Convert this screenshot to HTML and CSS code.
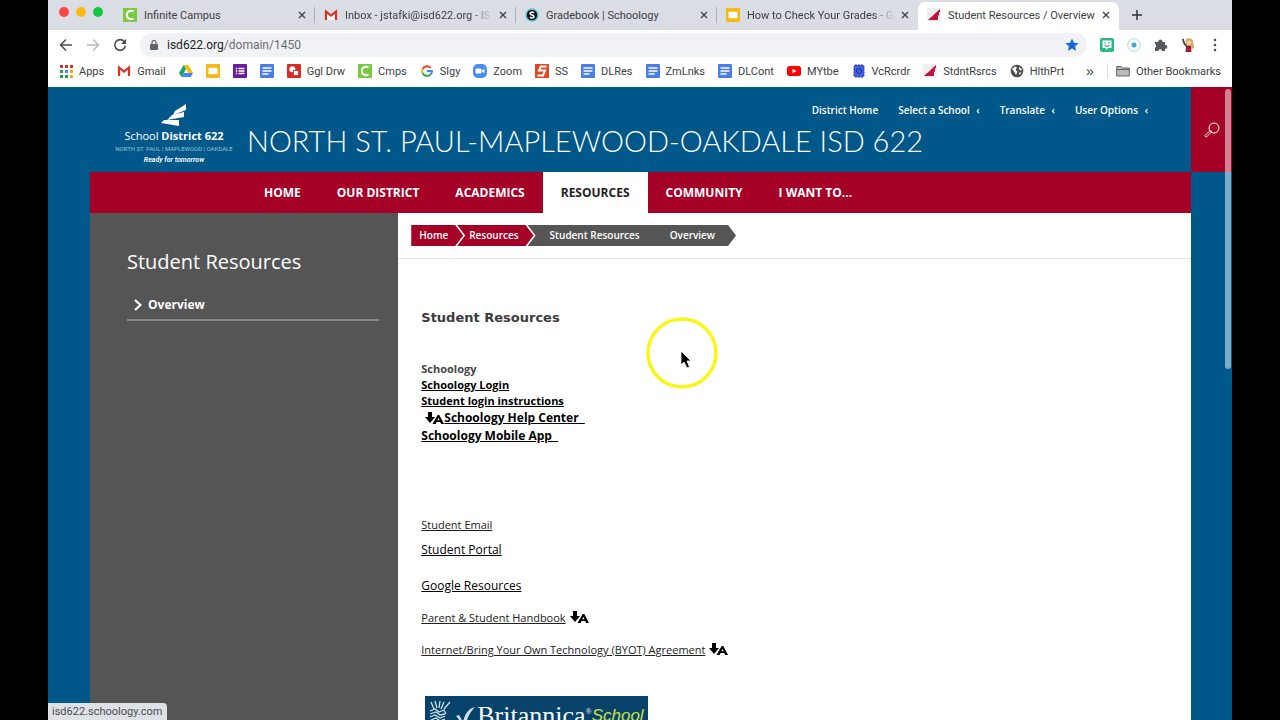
FILE: index.html
```html
<!DOCTYPE html>
<html lang="en">
<head>
    <meta charset="UTF-8">
    <meta name="viewport" content="width=device-width, initial-scale=1.0">
    <title>Student Resources / Overview</title>
    <link rel="stylesheet" href="styles.css">
</head>
<body>

    <!-- Shared icons -->
    <svg class="icon-defs" aria-hidden="true">
        <symbol id="i-campus" viewBox="0 0 14 14"><rect width="14" height="14" fill="#7ac943"/><path d="M10.5 3.2C6.500 1.800 3.800 4 3.800 7s2.700 5 6.700 3.800" fill="none" stroke="#fff" stroke-width="2"/></symbol>
        <symbol id="i-gmail" viewBox="0 0 14 14"><path d="M2 12V3.500l5 4 5-4V12" fill="#fff" stroke="#d93025" stroke-width="2.200"/></symbol>
        <symbol id="i-schoology" viewBox="0 0 14 14"><circle cx="7" cy="7" r="6" fill="#111" stroke="#5cc5d6" stroke-width="1.600"/><path d="M9 4.800C7.500 3.600 5 4 5 5.500S9 7 9 8.600 6.500 10.400 4.900 9.200" fill="none" stroke="#fff" stroke-width="1.500"/></symbol>
        <symbol id="i-slides" viewBox="0 0 14 14"><rect width="14" height="14" rx="1" fill="#f4b912"/><rect x="2.500" y="3.800" width="9" height="6.400" fill="#fff"/></symbol>
        <symbol id="i-forms" viewBox="0 0 14 14"><rect width="14" height="14" rx="1" fill="#6a1b9a"/><path d="M2.800 4.500h1.500M2.800 7h1.500M2.800 9.500h1.500M5.500 4.500h6M5.500 7h6M5.500 9.500h6" stroke="#fff" stroke-width="1.400"/></symbol>
        <symbol id="i-docs" viewBox="0 0 14 14"><rect width="14" height="14" rx="1" fill="#4a7de8"/><path d="M2.500 4h9M2.500 7h9M2.500 10h6" stroke="#fff" stroke-width="1.500"/></symbol>
        <symbol id="i-district" viewBox="0 0 14 14"><rect width="14" height="14" rx="2" fill="#eee"/><path d="M13 1v3L7 6.500zM12 4v3.500L4 9.500l3-3zM11 7.500V12L1 12l3-3z" fill="#c0143c"/></symbol>
        <symbol id="i-close" viewBox="0 0 8 8"><path d="M1 1l6 6M7 1L1 7" stroke="#444" stroke-width="1.400"/></symbol>
        <symbol id="i-translate" viewBox="0 0 19 12"><path d="M3 0h4v5h3l-5 6-5-6h3z"/><path d="M7.500 12l5.200-9h1.600l4.700 9h-2.800l-1-2h-3.600l-1 2zM12.300 8.300h2.200l-1.100-2.400z" fill-rule="evenodd"/></symbol>
    </svg>

    <div class="browser">

        <!-- Tabs -->
        <div class="tab-bar">
            <div class="window-dots"><span class="dot red"></span><span class="dot yellow"></span><span class="dot green"></span></div>
            <div class="tab"><svg class="fav"><use href="#i-campus"/></svg><span class="tab-title">Infinite Campus</span><button class="tab-close" aria-label="Close tab"><svg><use href="#i-close"/></svg></button></div>
            <div class="tab"><svg class="fav"><use href="#i-gmail"/></svg><span class="tab-title fade">Inbox - jstafki@isd622.org - IS</span><button class="tab-close" aria-label="Close tab"><svg><use href="#i-close"/></svg></button></div>
            <div class="tab"><svg class="fav"><use href="#i-schoology"/></svg><span class="tab-title">Gradebook | Schoology</span><button class="tab-close" aria-label="Close tab"><svg><use href="#i-close"/></svg></button></div>
            <div class="tab last"><svg class="fav"><use href="#i-slides"/></svg><span class="tab-title fade">How to Check Your Grades - G</span><button class="tab-close" aria-label="Close tab"><svg><use href="#i-close"/></svg></button></div>
            <div class="tab active"><svg class="fav"><use href="#i-district"/></svg><span class="tab-title">Student Resources / Overview</span><button class="tab-close" aria-label="Close tab"><svg><use href="#i-close"/></svg></button></div>
            <button class="new-tab" aria-label="New tab"><svg viewBox="0 0 10 10"><path d="M5 0v10M0 5h10" stroke="#333" stroke-width="1.500"/></svg></button>
        </div>

        <!-- Address bar -->
        <div class="toolbar">
            <button aria-label="Back"><svg viewBox="0 0 14 14"><path d="M13 7H2M7 1.500L1.500 7 7 12.500" fill="none" stroke="#4a4d51" stroke-width="1.500"/></svg></button>
            <button aria-label="Forward"><svg viewBox="0 0 14 14"><path d="M1 7h11M7 1.500L12.500 7 7 12.500" fill="none" stroke="#bbb" stroke-width="1.500"/></svg></button>
            <button aria-label="Reload"><svg viewBox="0 0 14 14"><path d="M11.500 4A5.300 5.300 0 1 0 12.300 8" fill="none" stroke="#4a4d51" stroke-width="1.600"/><path d="M13 1v5H8z" fill="#4a4d51"/></svg></button>
            <div class="address">
                <svg class="lock" viewBox="0 0 8 10"><rect y="4" width="8" height="6" rx="1" fill="#5f6368"/><path d="M2 4V2.500a2 2 0 0 1 4 0V4" fill="none" stroke="#5f6368" stroke-width="1.200"/></svg>
                <a class="url" href="#">isd622.org<span>/domain/1450</span></a>
                <button aria-label="Bookmark this page"><svg viewBox="0 0 14 14"><path d="M7 .5l1.900 4.300 4.700.4-3.500 3.100 1 4.700L7 10.600 2.900 13l1-4.700L.4 5.200l4.700-.4z" fill="#1a66d9"/></svg></button>
            </div>
            <div class="extensions">
                <button aria-label="Bitmoji"><svg viewBox="0 0 14 14"><rect width="14" height="14" rx="2" fill="#28b882"/><path d="M2.500 2.500h9v7.500H8L6.500 12l-1-2h-3z" fill="#fff"/><path d="M5 4.300v1.400M9 4.300v1.400M4.500 7c1 1.700 4 1.700 5 0" fill="none" stroke="#28b882" stroke-width="1.200"/></svg></button>
                <button aria-label="Screencastify"><svg viewBox="0 0 14 14"><circle cx="7" cy="7" r="6.300" fill="#fff" stroke="#a5d5e5"/><circle cx="7" cy="7" r="2.500" fill="#3ea6dc"/></svg></button>
                <button aria-label="Extensions"><svg viewBox="0 0 14 14"><path d="M1 4h3.500a2 2 0 1 1 3.800 0H11v3a1.900 1.900 0 1 1 0 3.700V13H8a1.800 1.800 0 0 0-3.600 0H1v-3.300a1.800 1.800 0 0 0 0-3.400z" fill="#55585c"/></svg></button>
                <button aria-label="Profile"><svg viewBox="0 0 14 16"><path d="M5 1c4-2 8 0 8 4l1 6-3 2-6-3-1-5z" fill="#d3aa63"/><circle cx="8" cy="5.500" r="2.700" fill="#f4cda5"/><path d="M1 1l2 6 3 3" fill="none" stroke="#5a4035" stroke-width="2"/><path d="M5 9h5l1 7H4z" fill="#a01c30"/><path d="M7 9l2 2 1-2z" fill="#222"/></svg></button>
                <button aria-label="Menu"><svg viewBox="0 0 14 14"><g fill="#4a4d51"><circle cx="7" cy="2" r="1.300"/><circle cx="7" cy="7" r="1.300"/><circle cx="7" cy="12" r="1.300"/></g></svg></button>
            </div>
        </div>

        <!-- Bookmarks -->
        <div class="bookmarks">
            <a href="#"><svg viewBox="0 0 14 14"><g fill="#d93025"><path d="M1 1h3v3H1zM6 1h3v3H6zM11 1h3v3h-3z"/></g><path d="M1 6h3v3H1z" fill="#2a9d4a"/><path d="M6 6h3v3H6z" fill="#4285f4"/><path d="M11 6h3v3h-3zM11 11h3v3h-3z" fill="#f0a818"/><path d="M1 11h3v3H1zM6 11h3v3H6z" fill="#2a9d4a"/></svg>Apps</a>
            <a href="#"><svg><use href="#i-gmail"/></svg>Gmail</a>
            <a href="#" aria-label="Drive"><svg viewBox="0 0 14 14"><path d="M4.700 1h4.600L14 9H9.500z" fill="#fbbc05"/><path d="M4.700 1L7 5 2.500 13 0 9z" fill="#1da462"/><path d="M4.700 9H14l-2.300 4H2.500z" fill="#4285f4"/></svg></a>
            <a href="#" aria-label="Slides"><svg><use href="#i-slides"/></svg></a>
            <a href="#" aria-label="Forms"><svg><use href="#i-forms"/></svg></a>
            <a href="#" aria-label="Docs"><svg><use href="#i-docs"/></svg></a>
            <a href="#"><svg viewBox="0 0 14 14"><rect width="14" height="14" rx="1" fill="#d92b25"/><circle cx="5.300" cy="5.300" r="3" fill="#fff"/><rect x="6.500" y="6.500" width="5" height="5" fill="#fff" stroke="#d92b25" stroke-width=".8"/></svg>Ggl Drw</a>
            <a href="#"><svg><use href="#i-campus"/></svg>Cmps</a>
            <a href="#"><svg viewBox="0 0 14 14"><g fill="none" stroke-width="2"><path d="M10.800 3.800A5 5 0 0 0 2.600 5" stroke="#ea4335"/><path d="M2.600 5a5 5 0 0 0 0 4" stroke="#fbbc05"/><path d="M2.600 9a5 5 0 0 0 7.800 1.700" stroke="#34a853"/><path d="M10.400 10.700A5 5 0 0 0 12 7H7" stroke="#4285f4"/></g></svg>Slgy</a>
            <a href="#"><svg viewBox="0 0 14 14"><rect width="14" height="14" rx="5" fill="#4a8cf0"/><rect x="2.500" y="4.500" width="6" height="5" rx="1" fill="#fff"/><path d="M9 6.500l2.500-1.700v4.400L9 7.500z" fill="#fff"/></svg>Zoom</a>
            <a href="#"><svg viewBox="0 0 14 14"><rect width="14" height="14" fill="#e0491f"/><path d="M11.500 2.500H5.800L4 6.500h6L8 11.500H2.500" fill="none" stroke="#fff" stroke-width="2"/></svg>SS</a>
            <a href="#"><svg><use href="#i-docs"/></svg>DLRes</a>
            <a href="#"><svg><use href="#i-docs"/></svg>ZmLnks</a>
            <a href="#"><svg><use href="#i-docs"/></svg>DLCont</a>
            <a href="#"><svg viewBox="0 0 14 14"><rect x="0" y="2" width="14" height="10" rx="2.500" fill="#f00"/><path d="M5.500 4.700v4.600L9.500 7z" fill="#fff"/></svg>MYtbe</a>
            <a href="#"><svg viewBox="0 0 14 14"><path d="M3 1h8l1 1v10l-1 1H3l-1-1V2z" fill="#4161e0" stroke="#26358c" stroke-dasharray="2 1"/><circle cx="7" cy="7" r="2.500" fill="none" stroke="#1c2c9e"/></svg>VcRcrdr</a>
            <a href="#"><svg><use href="#i-district"/></svg>StdntRsrcs</a>
            <a href="#"><svg viewBox="0 0 14 14"><circle cx="7" cy="7" r="6.300" fill="#4a4d51"/><path d="M2 5l3-2.500 2 1L5.500 6l2 1.500L6 11 4.500 8zM9 3l3 2-1 2-2-1.500zM9 8.500l2.500 0L9.500 11z" fill="#fff"/></svg>HlthPrt</a>
            <button class="more" aria-label="More bookmarks">»</button>
            <a class="other" href="#"><svg viewBox="0 0 14 14"><path d="M.7 2.500H5l1.500 1.500h6.800v8H.7z" fill="#bbb" stroke="#666"/><path d="M1 5.500h12" stroke="#666"/></svg>Other Bookmarks</a>
        </div>

        <!-- District site -->
        <div class="page">
            <header class="site-header">
                <a class="logo" href="#">
                    <svg viewBox="0 0 26 22"><path d="M25 0v6L12 11l2-4zM23 8v5L6 16l5-5zM18 16v6L0 19l3-3z" fill="#fff"/></svg>
                    <span class="logo-name">School <b>District 622</b></span>
                    <span class="logo-cities">NORTH ST. PAUL | MAPLEWOOD | OAKDALE</span>
                    <span class="logo-tag">Ready for tomorrow</span>
                </a>
                <div class="header-main">
                    <nav class="top-links">
                        <a href="#">District Home</a>
                        <a href="#">Select a School <i>‹</i></a>
                        <a href="#">Translate <i>‹</i></a>
                        <a href="#">User Options <i>‹</i></a>
                    </nav>
                    <h1>NORTH ST. PAUL-MAPLEWOOD-OAKDALE ISD 622</h1>
                </div>
                <button class="search" aria-label="Search"><svg viewBox="0 0 16 16"><circle cx="10" cy="6" r="5" fill="none" stroke="#fff"/><path d="M6.300 8.500l1.300 1.300-5.300 5.400-1.500-1.500z" fill="none" stroke="#fff" stroke-width=".9"/></svg></button>
            </header>

            <div class="container">
                <nav class="main-nav">
                    <a href="#">HOME</a>
                    <a href="#">OUR DISTRICT</a>
                    <a href="#">ACADEMICS</a>
                    <a class="current" href="#">RESOURCES</a>
                    <a href="#">COMMUNITY</a>
                    <a href="#">I WANT TO...</a>
                </nav>

                <div class="columns">
                    <aside class="side">
                        <h2>Student Resources</h2>
                        <a href="#"><svg viewBox="0 0 8 12"><path d="M1 1l5.500 5L1 11" fill="none" stroke="#fff" stroke-width="2.200"/></svg>Overview</a>
                    </aside>

                    <main class="content">
                        <nav class="crumbs">
                            <a class="crumb red first" href="#">Home</a>
                            <a class="crumb red" href="#">Resources</a>
                            <span class="crumb gray"><a href="#">Student Resources</a><a href="#">Overview</a></span>
                        </nav>

                        <div class="article">
                            <h2>Student Resources</h2>
                            <div class="schoology">
                                <h3>Schoology</h3>
                                <a href="#">Schoology Login</a>
                                <a href="#">Student login instructions</a>
                                <a class="big indent" href="#"><svg class="translate"><use href="#i-translate"/></svg>Schoology Help Center&nbsp;&nbsp;</a>
                                <a class="big" href="#">Schoology Mobile App&nbsp;&nbsp;</a>
                            </div>
                            <p class="email"><a href="#">Student Email</a></p>
                            <p class="portal"><a class="dark" href="#">Student Portal</a></p>
                            <p class="google"><a class="dark" href="#">Google Resources</a></p>
                            <p><a href="#">Parent &amp; Student Handbook</a><svg class="translate"><use href="#i-translate"/></svg></p>
                            <p><a href="#">Internet/Bring Your Own Technology (BYOT) Agreement</a><svg class="translate"><use href="#i-translate"/></svg></p>
                            <a class="britannica" href="#">
                                <svg viewBox="0 0 52 36"><g fill="none" stroke="#cfe0ea" stroke-width="1.300"><path d="M6 6l3 7M10 5l2 7M15 5l-1 7M19 6l-3 7M25 6l-6 7M5 15l5-2 4 3 5-2 2 4M5 18l6-2 4 3 5-1M5 21l5-2 5 3 5-2M6 24l5-2 4 3 5-2M7 28l5-2 6 2"/></g><path d="M31 20l3-1 4 7c2-8 5-13 12-15-5 5-9 12-10 22h-3c-1-6-3-10-6-13z" fill="#cfe0ea"/></svg>
                                <span>Britannica<sup>®</sup></span><em>School</em>
                            </a>
                        </div>
                    </main>
                </div>
            </div>

            <div class="scroll-thumb"></div>
            <div class="status">isd622.schoology.com</div>
            <svg class="pointer" viewBox="0 0 72 72"><circle cx="36" cy="36" r="34" fill="none" stroke="#fbf518" stroke-width="3.500"/><path d="M35 34v14l3-3 3 6 2.500-1-2.500-6h4z" fill="#000" stroke="#fff" stroke-width=".8"/></svg>
        </div>
    </div>

</body>
</html>
```
FILE: styles.css
```css
/* General Styles */
* {
    box-sizing: border-box;
}

body {
    margin: 0;
    background: #000;
    font-family: "Open Sans", "Noto Sans", sans-serif;
}

h1, h2, h3, p {
    margin: 0;
}

a {
    color: inherit;
    text-decoration: none;
}

button {
    border: none;
    background: none;
    padding: 0;
    cursor: pointer;
}

svg {
    display: block;
    flex: none;
}

.icon-defs {
    position: absolute;
    width: 0;
    height: 0;
}

.browser {
    display: flex;
    flex-direction: column;
    height: 100vh;
    margin: 0 48px;
    overflow: hidden;
    background: #fff;
    color: #3c4043;
    font-family: Roboto, sans-serif;
    font-size: 11px;
}

/* Tabs */
.tab-bar {
    display: flex;
    flex: none;
    height: 30px;
    padding-top: 2px;
    background: #dbdde4;
}

.window-dots {
    display: flex;
    gap: 7px;
    width: 66px;
    padding: 5px 0 0 11px;
}

.dot {
    width: 10px;
    height: 10px;
    border-radius: 50%;
}

.dot.red { background: #fc4545; }
.dot.yellow { background: #fdb913; }
.dot.green { background: #0fc943; }

.tab {
    display: flex;
    align-items: center;
    flex: 0 1 201px;
    min-width: 0;
    height: 26px;
    padding: 0 9px;
    background: linear-gradient(#aeb0b6, #aeb0b6) right center / 1px 16px no-repeat;
}

.tab.last {
    background: none;
}

.tab.active {
    height: 28px;
    padding-bottom: 2px;
    background: #fff;
    border-radius: 7px 7px 0 0;
}

.fav {
    width: 14px;
    height: 14px;
    margin-right: 7px;
}

.tab-title {
    flex: 1;
    overflow: hidden;
    white-space: nowrap;
}

.tab-title.fade {
    -webkit-mask-image: linear-gradient(to right, #000 85%, transparent);
    mask-image: linear-gradient(to right, #000 85%, transparent);
}

.tab-close {
    margin-left: 6px;
}

.tab-close svg {
    width: 8px;
    height: 8px;
}

.new-tab {
    width: 36px;
    height: 26px;
}

.new-tab svg {
    width: 10px;
    height: 10px;
    margin: 0 auto;
}

/* Address bar */
.toolbar {
    display: flex;
    align-items: center;
    flex: none;
    gap: 13px;
    height: 29px;
    padding: 0 10px 0 11px;
}

.toolbar button svg {
    width: 14px;
    height: 14px;
}

.address {
    display: flex;
    align-items: center;
    flex: 1;
    height: 24px;
    padding: 0 8px 0 10px;
    border-radius: 12px;
    background: #f1f2f5;
}

.lock {
    width: 8px;
    height: 10px;
    margin-right: 9px;
}

.url {
    flex: 1;
    color: #222;
    font-size: 12px;
}

.url span {
    color: #686b70;
}

.extensions {
    display: flex;
    gap: 13px;
}

/* Bookmarks */
.bookmarks {
    display: flex;
    align-items: center;
    flex: none;
    gap: 13px;
    height: 28px;
    padding: 0 11px 4px;
    white-space: nowrap;
}

.bookmarks a {
    display: flex;
    align-items: center;
    gap: 6px;
}

.bookmarks svg {
    width: 14px;
    height: 14px;
}

.more {
    margin-left: auto;
    color: #3c4043;
    font-size: 14px;
}

.bookmarks .other {
    padding-left: 8px;
    border-left: 1px solid #ddd;
}

/* District page */
.page {
    position: relative;
    flex: 1;
    min-height: 0;
    overflow: hidden;
    background: #00578a;
    font-family: "Open Sans", "Noto Sans", sans-serif;
}

.site-header {
    display: flex;
    height: 85px;
    color: #fff;
}

.logo {
    display: flex;
    flex-direction: column;
    align-items: center;
    width: 120px;
    margin-left: 66px;
    padding-top: 17px;
    white-space: nowrap;
}

.logo svg {
    width: 26px;
    height: 22px;
}

.logo-name {
    margin-top: 2px;
    font-size: 11px;
    line-height: 16px;
}

.logo-cities {
    color: #9cc4dc;
    font-family: Roboto, sans-serif;
    font-size: 6px;
    line-height: 10px;
}

.logo-tag {
    font-family: Roboto, sans-serif;
    font-size: 7px;
    font-style: italic;
    font-weight: 600;
    line-height: 12px;
}

.header-main {
    flex: 1;
    padding: 15px 43px 0 13px;
}

.top-links {
    display: flex;
    justify-content: flex-end;
    gap: 20px;
    font-size: 10px;
    font-weight: 600;
    line-height: 16px;
}

.top-links i {
    margin-left: 4px;
    font-style: normal;
}

.site-header h1 {
    font-family: Lato, sans-serif;
    font-size: 29px;
    font-weight: 300;
    line-height: 46px;
    white-space: nowrap;
}

.search {
    width: 41px;
    background: #a50026;
}

.search svg {
    width: 16px;
    height: 16px;
    margin: 0 auto;
}

.container {
    margin: 0 41px 0 42px;
}

/* Main navigation */
.main-nav {
    display: flex;
    height: 41px;
    padding-left: 156px;
    background: #a50026;
    color: #fff;
    font-size: 12px;
    font-weight: 700;
    line-height: 41px;
}

.main-nav a {
    padding: 0 18px;
}

.main-nav .current {
    background: #fff;
    color: #222;
}

.columns {
    display: flex;
    min-height: 520px;
}

/* Side menu */
.side {
    width: 28%;
    padding: 34px 19px 0 37px;
    background: #555;
    color: #fff;
}

.side h2 {
    font-size: 20px;
    font-weight: 400;
    line-height: 30px;
}

.side a {
    display: flex;
    align-items: center;
    gap: 6px;
    margin-top: 14px;
    padding: 0 7px;
    border-bottom: 2px solid #888;
    font-size: 12px;
    font-weight: 700;
    line-height: 28px;
}

.side svg {
    width: 8px;
    height: 12px;
}

.content {
    flex: 1;
    background: #fff;
}

/* Breadcrumbs */
.crumbs {
    display: flex;
    height: 46px;
    padding: 12px 13px;
    border-bottom: 1px solid #dde4e4;
    color: #fff;
    font-size: 10px;
    font-weight: 600;
    line-height: 20px;
}

.crumb {
    clip-path: polygon(0 0, calc(100% - 8px) 0, 100% 50%, calc(100% - 8px) 100%, 0 100%, 8px 50%);
    margin-left: -6px;
    padding: 0 15px 0 12px;
}

.crumb.first {
    clip-path: polygon(0 0, calc(100% - 8px) 0, 100% 50%, calc(100% - 8px) 100%, 0 100%);
    margin-left: 0;
    padding-left: 8px;
}

.crumb.red {
    background: #a50026;
}

.crumb.gray {
    display: flex;
    gap: 30px;
    padding: 0 21px 0 22px;
    background: #555;
}

/* Article */
.article {
    padding: 49px 23px 0;
    color: #222;
    font-size: 11px;
    line-height: 16px;
}

.article h2 {
    color: #3b3b3b;
    font-family: "DejaVu Sans", sans-serif;
    font-size: 13px;
    line-height: 20px;
}

.schoology {
    display: flex;
    flex-direction: column;
    align-items: flex-start;
    margin-top: 33px;
    color: #000;
    font-weight: 700;
}

.schoology h3 {
    color: #444;
    font-size: 11px;
}

.article a {
    text-decoration: underline;
}

.article .big {
    font-size: 12px;
    line-height: 18px;
}

.article .indent {
    display: flex;
    align-items: center;
    margin-left: 4px;
}

.translate {
    display: inline-block;
    width: 19px;
    height: 12px;
    vertical-align: -1px;
}

.article p {
    margin-bottom: 16px;
}

.article p .translate {
    margin-left: 4px;
}

.article .email {
    margin: 72px 0 9px;
}

.article .portal {
    margin-bottom: 20px;
}

.article .dark {
    color: #000;
    font-size: 12px;
    font-weight: 500;
}

.article .britannica {
    display: flex;
    width: 223px;
    height: 60px;
    margin: 38px 0 0 4px;
    background: #07426b;
    color: #fff;
    font-family: "Liberation Serif", serif;
    font-size: 26px;
    line-height: 40px;
    text-decoration: none;
}

.britannica svg {
    width: 52px;
    height: 36px;
}

.britannica sup {
    font-size: 8px;
    line-height: 8px;
    vertical-align: 10px;
}

.britannica em {
    color: #cde04a;
    font-family: "Liberation Sans", sans-serif;
    font-size: 17px;
}

/* Things on top of the page */
.scroll-thumb {
    position: absolute;
    top: 2px;
    right: 1px;
    width: 6px;
    height: 280px;
    border-radius: 3px;
    background: rgba(255, 255, 255, 0.5);
}

.status {
    position: absolute;
    bottom: 0;
    left: 0;
    padding: 0 5px 0 4px;
    border-radius: 0 4px 0 0;
    background: #dee1e6;
    color: #4a4d51;
    font-family: Roboto, sans-serif;
    font-size: 11px;
    line-height: 17px;
}

.pointer {
    position: absolute;
    top: 230px;
    left: 598px;
    width: 72px;
    height: 72px;
}
```
